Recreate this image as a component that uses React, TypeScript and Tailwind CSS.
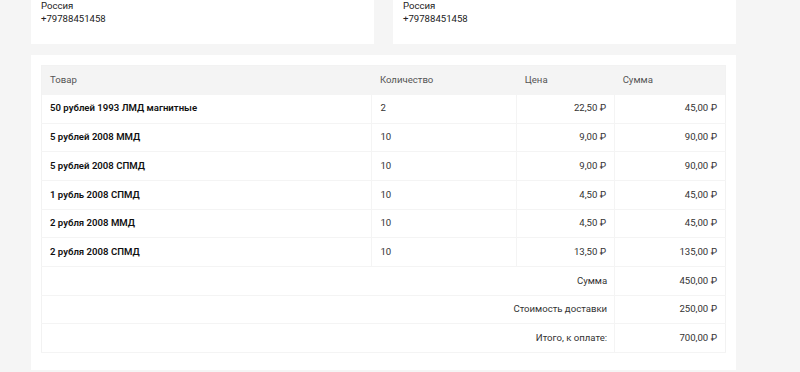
import React from "react";

const rows = [
  ["50 рублей 1993 ЛМД магнитные", "2", "22,50 ₽", "45,00 ₽"],
  ["5 рублей 2008 ММД", "10", "9,00 ₽", "90,00 ₽"],
  ["5 рублей 2008 СПМД", "10", "9,00 ₽", "90,00 ₽"],
  ["1 рубль 2008 СПМД", "10", "4,50 ₽", "45,00 ₽"],
  ["2 рубля 2008 ММД", "10", "4,50 ₽", "45,00 ₽"],
  ["2 рубля 2008 СПМД", "10", "13,50 ₽", "135,00 ₽"],
];

const totals = [
  ["Сумма", "450,00 ₽"],
  ["Стоимость доставки", "250,00 ₽"],
  ["Итого, к оплате:", "700,00 ₽"],
];

export default function App() {
  return (
    <div
      className="w-[800px] h-[372px] overflow-hidden bg-[#f5f5f5] text-[9.6px] text-[#222]"
      style={{ fontFamily: "Roboto, 'Noto Sans', sans-serif" }}
    >
      <div className="flex gap-[19px] pl-[31px] -mt-[1px]">
        <div className="w-[343px] h-[45px] bg-white px-[10px] leading-[13px]">
          <div>Россия</div>
          <div>+79788451458</div>
        </div>
        <div className="w-[343px] h-[45px] bg-white px-[10px] leading-[13px]">
          <div>Россия</div>
          <div>+79788451458</div>
        </div>
      </div>
      <div className="ml-[31px] mt-[11px] w-[705px] h-[315px] bg-white px-[10px] pt-[10px]">
        <table className="w-[685px] border-collapse border border-[#f2f2f2]">
          <colgroup>
            <col className="w-[331px]" />
            <col className="w-[145px]" />
            <col className="w-[98px]" />
            <col className="w-[111px]" />
          </colgroup>
          <thead>
            <tr className="h-[29px] bg-[#f4f4f4] text-[#555]">
              <th className="text-left font-normal px-[8px]">Товар</th>
              <th className="text-left font-normal px-[8px]">Количество</th>
              <th className="text-left font-normal px-[8px]">Цена</th>
              <th className="text-left font-normal px-[8px]">Сумма</th>
            </tr>
          </thead>
          <tbody>
            {rows.map((r, i) => (
              <tr key={i} className="h-[28.67px] border-b border-[#f4f4f4]">
                <td className="px-[8px] font-semibold text-[#111] border-r border-[#f4f4f4]">{r[0]}</td>
                <td className="px-[8px] text-[#333] border-r border-[#f4f4f4]">{r[1]}</td>
                <td className="px-[8px] text-right text-[#333] border-r border-[#f4f4f4]">{r[2]}</td>
                <td className="px-[8px] text-right text-[#333]">{r[3]}</td>
              </tr>
            ))}
            {totals.map((t, i) => (
              <tr key={i} className="h-[28.67px] border-b border-[#f4f4f4]">
                <td colSpan={3} className="pl-[8px] pr-[7px] text-right text-[#333] border-r border-[#f4f4f4]">
                  {t[0]}
                </td>
                <td className="px-[8px] text-right text-[#333]">{t[1]}</td>
              </tr>
            ))}
          </tbody>
        </table>
      </div>
    </div>
  );
}
